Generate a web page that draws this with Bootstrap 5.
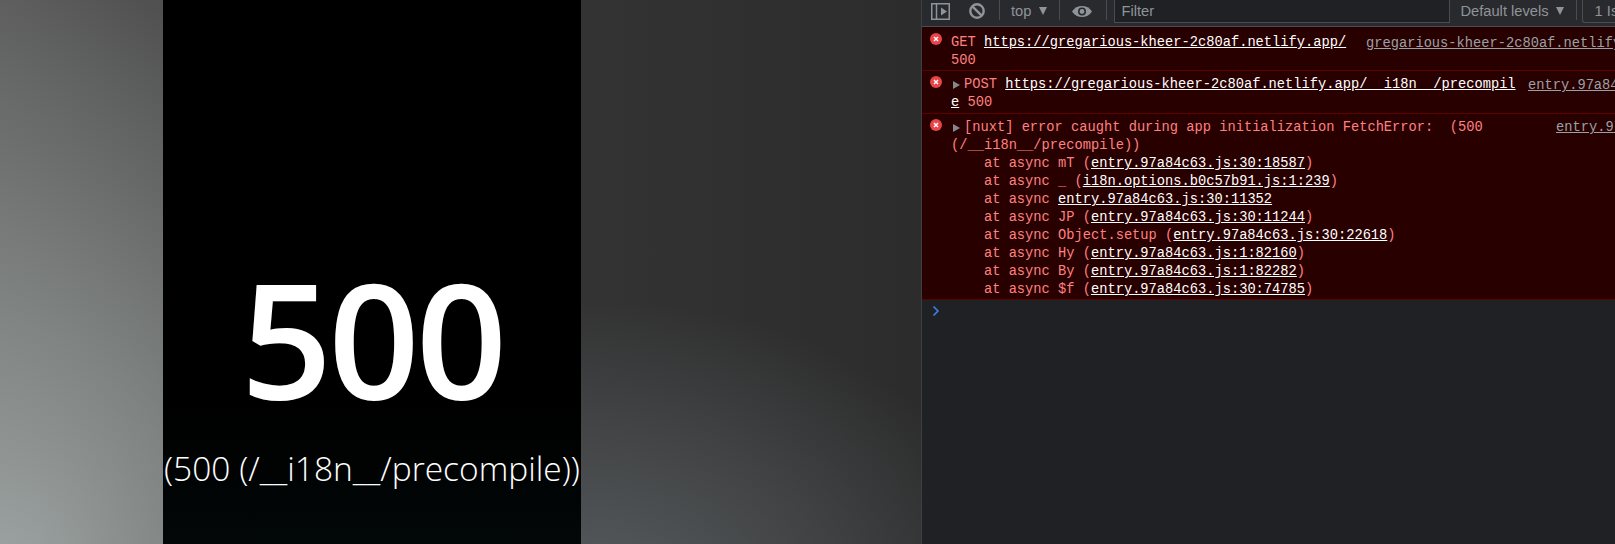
<!doctype html>
<html lang="en">
<head>
<meta charset="utf-8">
<title>500</title>
<link href="https://cdn.jsdelivr.net/npm/bootstrap@5.3.0/dist/css/bootstrap.min.css" rel="stylesheet">
<style>
html,body{height:100%;margin:0;overflow:hidden;background:#202124}
.stage{height:544px;width:1615px}
.backdrop{width:921px;background:
 radial-gradient(ellipse 420px 300px at 600px 600px,rgba(100,106,110,.75),rgba(100,106,110,0)),
 radial-gradient(ellipse 520px 600px at 0 580px,rgba(168,176,174,.86),rgba(168,176,174,0)),
 linear-gradient(to right,#5c5c5c,#505050 163px,#333 581px,#2c2c2c 921px)}
.errpanel{width:418px;margin-left:163px;background:linear-gradient(#000 75%,#020707);color:#fff;font-family:"Open Sans",sans-serif;padding-bottom:54px}
.errcode{font-size:160px;font-weight:600;line-height:1;letter-spacing:-4px;margin-bottom:29px}
.errmsg{font-size:33.5px;font-weight:300;line-height:44px;white-space:nowrap}
.tools{width:694px;border-left:1px solid #3c3f43;font-family:"Liberation Mono",monospace;font-size:13.73px;line-height:18px}
.toolbar{height:27px;background:#292a2d;border-bottom:1px solid #494c50;color:#8f9499;font-family:"Liberation Sans",sans-serif;font-size:14.7px;padding-bottom:4px}
.toolbar>*{flex-shrink:0}
.tsep{width:1px;height:20px;background:#494c50;align-self:flex-start}
.filterbox{width:336px;height:23px;background:#202124;border:1px solid #494c50;border-top:0;padding-left:6px;line-height:22px;align-self:flex-start;margin-left:7px}
.lvlbox{height:23px;border:1px solid #494c50;border-top:0;padding-left:12px;line-height:22px;align-self:flex-start;margin-left:5px;flex-grow:1;overflow:hidden;border-right:0;border-bottom-left-radius:3px}
.caret{width:0;height:0;border-left:4.500px solid transparent;border-right:4.500px solid transparent;border-top:8px solid #8f9499}
.g-9{margin-left:9px}.g-19{margin-left:19px}.g-14{margin-left:14px}.g-11{margin-left:11px}.g-8{margin-left:8px}.g-12{margin-left:12px}.g-10{margin-left:10px}.g-7{margin-left:7px}
.logline{background:#290000;border-bottom:1px solid #5c0000;color:#ff8080;padding:5px 0 0 29px;position:relative}
.logline.firstline{padding-top:7px}
.logline.midline{padding-bottom:1px}
.logicon{position:absolute;left:8px;top:5px}
.firstline .logicon{top:6px}
.logtext{white-space:pre;flex:1 1 0;min-width:0}
.srcref{flex-shrink:0;overflow:hidden;white-space:nowrap;color:#9aa0a6;text-decoration:underline}
.srcref.lowered{margin-top:1px}
.w-src-a{width:249px}.w-src-b{width:87px}.w-src-c{width:59px}
.logline a{color:#fff}
.twisty{display:inline-block;width:0;height:0;border-top:4.500px solid transparent;border-bottom:4.500px solid transparent;border-left:7px solid #85888c;margin:0 4px 0 2px;vertical-align:-1px}
.prompt{padding:5px 0 0 10px}
</style>
</head>
<body>
<div class="stage d-flex">
  <div class="backdrop flex-shrink-0">
    <div class="errpanel h-100 d-flex flex-column justify-content-end align-items-center">
      <div class="errcode">500</div>
      <div class="errmsg">(500 (/__i18n__/precompile))</div>
    </div>
  </div>
  <div class="tools flex-shrink-0 d-flex flex-column">
    <div class="toolbar d-flex align-items-center flex-shrink-0">
      <svg class="g-9" width="19" height="17" viewBox="0 0 19 17" fill="none"><rect x=".75" y=".75" width="17.500" height="15.500" stroke="#8f9499" stroke-width="1.500"/><path d="M5.500 1v15" stroke="#8f9499" stroke-width="1.500"/><path d="M10 4.500 16 8.500l-6 4z" fill="#8f9499"/></svg>
      <svg class="g-19" width="16" height="16" viewBox="0 0 16 16" fill="none" stroke="#8f9499" stroke-width="2.400"><circle cx="8" cy="8" r="6.700"/><path d="M3.300 3.300l9.400 9.400"/></svg>
      <span class="tsep g-14"></span>
      <span class="g-11">top</span><span class="caret g-8"></span>
      <span class="tsep g-12"></span>
      <svg class="g-12" width="20" height="11" viewBox="0 0 20 11"><path d="M0 5.500C2.500 1.800 6 0 10 0s7.500 1.800 10 5.500C17.500 9.200 14 11 10 11S2.500 9.200 0 5.500z" fill="#8f9499"/><circle cx="10" cy="5.500" r="4" fill="#292a2d"/><circle cx="10" cy="5.500" r="2.400" fill="#8f9499"/></svg>
      <span class="tsep g-14"></span>
      <div class="filterbox">Filter</div>
      <span class="g-10">Default levels</span><span class="caret g-7"></span>
      <span class="tsep g-12"></span>
      <div class="lvlbox text-nowrap">1 Issue</div>
    </div>
    <div class="logline firstline d-flex">
      <svg class="logicon" width="12" height="12" viewBox="0 0 12 12"><circle cx="6" cy="6" r="6" fill="#e8444a"/><path d="M4 4l4 4M8 4l-4 4" stroke="#fff" stroke-width="1.400"/></svg>
      <div class="logtext">GET <a href="#">https://gregarious-kheer-2c80af.netlify.app/</a><br>500</div>
      <span class="srcref lowered w-src-a">gregarious-kheer-2c80af.netlify.app/</span>
    </div>
    <div class="logline midline d-flex">
      <svg class="logicon" width="12" height="12" viewBox="0 0 12 12"><circle cx="6" cy="6" r="6" fill="#e8444a"/><path d="M4 4l4 4M8 4l-4 4" stroke="#fff" stroke-width="1.400"/></svg>
      <div class="logtext"><span class="twisty"></span>POST <a href="#">https://gregarious-kheer-2c80af.netlify.app/__i18n__/precompil<br>e</a> 500</div>
      <span class="srcref lowered w-src-b">entry.97a84c63.js:30</span>
    </div>
    <div class="logline d-flex">
      <svg class="logicon" width="12" height="12" viewBox="0 0 12 12"><circle cx="6" cy="6" r="6" fill="#e8444a"/><path d="M4 4l4 4M8 4l-4 4" stroke="#fff" stroke-width="1.400"/></svg>
      <div class="logtext"><span class="twisty"></span>[nuxt] error caught during app initialization FetchError:  (500<br>(/__i18n__/precompile))<br>    at async mT (<a href="#">entry.97a84c63.js:30:18587</a>)<br>    at async _ (<a href="#">i18n.options.b0c57b91.js:1:239</a>)<br>    at async <a href="#">entry.97a84c63.js:30:11352</a><br>    at async JP (<a href="#">entry.97a84c63.js:30:11244</a>)<br>    at async Object.setup (<a href="#">entry.97a84c63.js:30:22618</a>)<br>    at async Hy (<a href="#">entry.97a84c63.js:1:82160</a>)<br>    at async By (<a href="#">entry.97a84c63.js:1:82282</a>)<br>    at async $f (<a href="#">entry.97a84c63.js:30:74785</a>)</div>
      <span class="srcref w-src-c">entry.97a84c63.js:30</span>
    </div>
    <div class="prompt flex-grow-1"><svg class="d-block" width="8" height="12" viewBox="0 0 8 12" fill="none" stroke="#3b82e8" stroke-width="1.600"><path d="M1.500 1.500 6 6l-4.500 4.500"/></svg></div>
  </div>
</div>
</body>
</html>
